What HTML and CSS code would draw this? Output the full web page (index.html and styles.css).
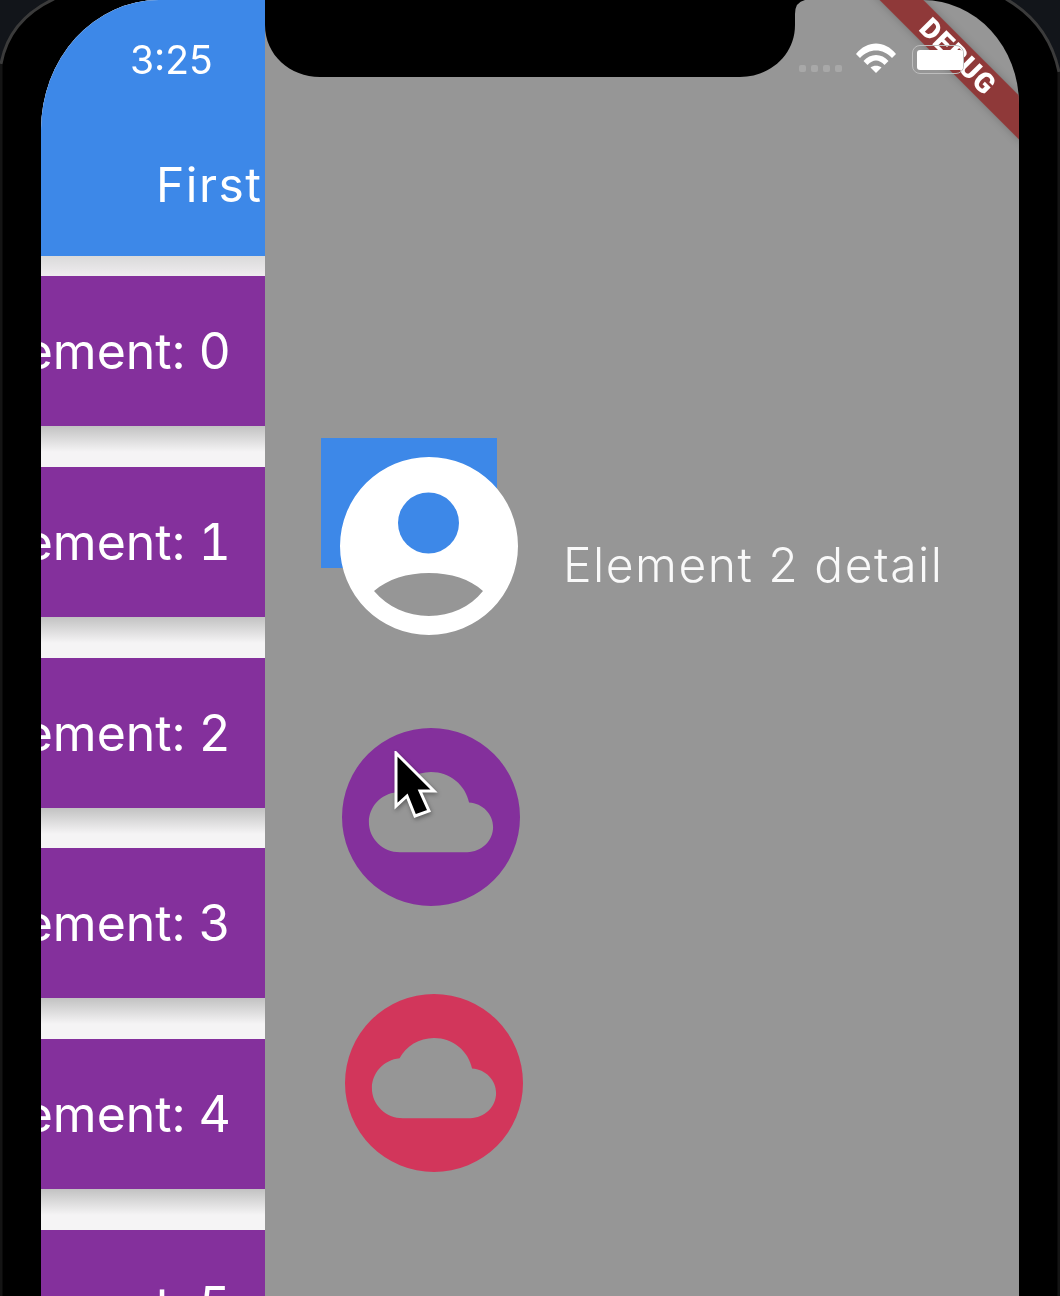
FILE: index.html
```html
<!DOCTYPE html>
<html lang="en">
<head>
<meta charset="utf-8">
<title>Flutter demo</title>
<link rel="stylesheet" href="styles.css">
</head>
<body>
<div class="stage">
  <main class="screen">
    <section class="list">
      <header class="appbar">
        <div class="time">3:25</div>
        <div class="title">First Page</div>
      </header>
      <div class="rows">
        <div class="row"><span>Element: 0</span></div>
        <div class="row"><span>Element: 1</span></div>
        <div class="row"><span>Element: 2</span></div>
        <div class="row"><span>Element: 3</span></div>
        <div class="row"><span>Element: 4</span></div>
        <div class="row"><span>Element: 5</span></div>
      </div>
    </section>
    <section class="detail">
      <div class="hero">
        <div class="hero-box">
          <svg class="avatar" viewBox="0 0 178 178" width="178" height="178">
            <path class="avatar-face" fill-rule="evenodd" d="M89 0a89 89 0 1 0 0 178a89 89 0 1 0 0-178ZM34 134C48 122 67 116 89 116C111 116 130 122 143 134C130 150 111 159 89 159C67 159 48 150 34 134Z"/>
            <circle class="avatar-head" cx="88.500" cy="66" r="30.500"/>
          </svg>
        </div>
        <div class="detail-text">Element 2 detail</div>
      </div>
      <svg class="disc disc-purple" viewBox="0 0 34.4 34.4" width="178" height="178">
        <path fill-rule="evenodd" d="M17.2 0a17.2 17.2 0 1 0 0 34.4a17.2 17.2 0 1 0 0-34.4ZM24.55 14.38C23.87 11.03 20.84 8.5 17.2 8.5C14.31 8.5 11.8 10.09 10.55 12.42C7.54 12.73 5.2 15.2 5.2 18.2C5.2 21.41 7.89 24 11.2 24H24.2C26.96 24 29.2 21.83 29.2 19.15C29.2 16.59 27.15 14.55 24.55 14.38Z"/>
      </svg>
      <svg class="disc disc-red" viewBox="0 0 34.4 34.4" width="178" height="178">
        <path fill-rule="evenodd" d="M17.2 0a17.2 17.2 0 1 0 0 34.4a17.2 17.2 0 1 0 0-34.4ZM24.55 14.38C23.87 11.03 20.84 8.5 17.2 8.5C14.31 8.5 11.8 10.09 10.55 12.42C7.54 12.73 5.2 15.2 5.2 18.2C5.2 21.41 7.89 24 11.2 24H24.2C26.96 24 29.2 21.83 29.2 19.15C29.2 16.59 27.15 14.55 24.55 14.38Z"/>
      </svg>
    </section>
    <div class="ribbon"><span>DEBUG</span></div>
  </main>

  <svg class="notch" viewBox="0 0 560 80" width="560" height="80">
    <path d="M0 0H550Q540 2 540 14V25C540 55 515 77 485 77H65C35 77 10 55 10 25V14Q10 2 0 0Z"/>
  </svg>

  <svg class="bezel" viewBox="0 0 1060 1296" width="1060" height="1296">
    <path class="bezel-out" d="M0 0H54Q8 20 0 64Z"/>
    <path class="bezel-out" d="M1060 0H1006Q1050 24 1060 72Z"/>
    <path class="bezel-line" d="M1 64Q9 20 54 -1"/>
    <path class="bezel-line" d="M1059 72Q1049 24 1006 -1"/>
    <path class="bezel-side" d="M1 64V1296"/>
    <path class="bezel-side" d="M1059 72V1296"/>
  </svg>

  <div class="status">
    <span class="signal"><i></i><i></i><i></i><i></i></span>
    <svg class="wifi" viewBox="0 0 40 30" width="40" height="30">
      <path d="M0 11C11 -3 29 -3 40 11L36 15C27 5 13 5 4 15Z"/>
      <path d="M7.500 18C14 10 26 10 32.500 18L28.500 22C23 16 17 16 11.500 22Z"/>
      <path d="M14.500 24.500C17.500 22 22.500 22 25.500 24.500L20 30Z"/>
    </svg>
    <span class="battery"><b></b></span>
  </div>

  <svg class="cursor" viewBox="0 0 50 70" width="50" height="70">
    <path d="M3 2V55L14 45L22 65L36 60L27 40L41 40Z"/>
  </svg>
</div>
</body>
</html>
```
FILE: styles.css
```css
* { box-sizing: border-box; }

html, body {
  margin: 0;
  padding: 0;
  background: #000;
}

.stage {
  position: relative;
  width: 1060px;
  height: 1296px;
  overflow: hidden;
  background: #000;
  padding-left: 41px;
  font-family: Inter, Roboto, "Liberation Sans", sans-serif;
  color: #fff;
  filter: blur(0.6px);
}

.screen {
  position: relative;
  display: flex;
  width: 978px;
  height: 1296px;
  overflow: hidden;
  border-radius: 118px 96px 0 0 / 130px 104px 0 0;
  background: #969696;
}

/* left list */
.list {
  width: 224px;
  flex: none;
  overflow: hidden;
  background: #f5f4f5;
}

.appbar {
  height: 256px;
  background: #3d88e8;
  padding-left: 89px;
  position: relative;
  z-index: 2;
  white-space: nowrap;
}

.appbar::after {
  content: "";
  position: absolute;
  left: 0;
  right: 0;
  top: 100%;
  height: 20px;
  background: linear-gradient(#dadada, #efecef);
}

.time {
  padding-top: 37px;
  font-size: 39px;
  line-height: 46px;
}

.title {
  margin: 73px 0 0 26px;
  font-size: 48px;
  line-height: 58px;
  letter-spacing: 1.5px;
}

.rows {
  display: flex;
  flex-direction: column;
  gap: 40.8px;
  padding-top: 20px;
}

.row {
  position: relative;
  display: flex;
  flex: none;
  justify-content: flex-end;
  align-items: center;
  height: 150px;
  padding-right: 34px;
  background: #84309c;
  font-size: 50px;
  font-variant-numeric: tabular-nums;
  white-space: nowrap;
}

.row::after {
  content: "";
  position: absolute;
  left: 0;
  right: 0;
  top: 100%;
  height: 26px;
  background: linear-gradient(#c2c2c2, #f5f4f5);
}

.row span { flex: none; }

/* right detail */
.detail {
  flex: 1;
  display: flex;
  flex-direction: column;
  align-items: flex-start;
  padding: 438px 0 0 56px;
}

.hero {
  display: flex;
  height: 197px;
}

.hero-box {
  position: relative;
  width: 176px;
  height: 130px;
  background: #3d88e8;
}

.avatar {
  position: absolute;
  left: 19px;
  top: 19px;
}

.avatar-face { fill: #fff; }
.avatar-head { fill: #3d88e8; }

.detail-text {
  margin: 99px 0 0 66px;
  font-size: 48px;
  font-weight: 300;
  line-height: 56px;
  letter-spacing: 1.5px;
  white-space: nowrap;
  color: #f9f9f9;
}

.disc {
  display: block;
  flex: none;
}

.disc-purple {
  margin: 93px 0 0 21px;
  fill: #84309c;
}

.disc-red {
  margin: 88px 0 0 24px;
  fill: #d2365b;
}

/* overlays */
.ribbon {
  position: absolute;
  left: 810px;
  top: 41px;
  width: 214px;
  height: 31px;
  display: flex;
  align-items: center;
  justify-content: center;
  background: rgba(142, 44, 44, 0.88);
  box-shadow: 0 0 8px rgba(0, 0, 0, 0.22);
  transform: rotate(45deg);
  font-family: Roboto, "Liberation Sans", sans-serif;
  font-size: 28px;
  font-weight: 900;
  letter-spacing: 1px;
}

.notch {
  position: absolute;
  left: 255px;
  top: 0;
  fill: #000;
}

.bezel {
  position: absolute;
  left: 0;
  top: 0;
  pointer-events: none;
}

.bezel-out { fill: #12151a; }

.bezel-line {
  fill: none;
  stroke: #3b3b3b;
  stroke-width: 3;
}

.bezel-side {
  fill: none;
  stroke: #141414;
  stroke-width: 3;
}

.status {
  position: absolute;
  left: 799px;
  top: 43px;
  display: flex;
  align-items: flex-start;
}

.signal {
  display: flex;
  gap: 5px;
  margin-top: 22px;
}

.signal i {
  width: 7px;
  height: 7px;
  border-radius: 2px;
  background: #a8a8a8;
}

.wifi {
  margin-left: 14px;
  fill: #fff;
}

.battery {
  display: block;
  width: 52px;
  height: 29px;
  margin: 2px 0 0 16px;
  padding: 4px;
  border: 1.500px solid #bdbdbd;
  border-radius: 8px;
}

.battery b {
  display: block;
  width: 46px;
  height: 20px;
  border-radius: 3px;
  background: #fff;
}

.cursor {
  position: absolute;
  left: 393px;
  top: 751px;
  fill: #000;
  stroke: #fff;
  stroke-width: 3;
  filter: drop-shadow(1px 2px 2px rgba(0, 0, 0, 0.35));
}
```
